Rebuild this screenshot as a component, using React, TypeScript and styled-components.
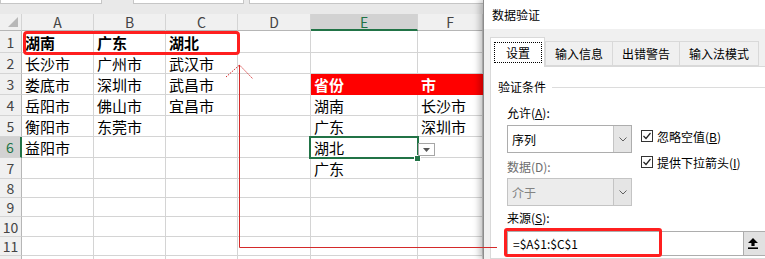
import styled, { createGlobalStyle } from "styled-components";

const GlobalStyle = createGlobalStyle`
  html, body {
    margin: 0;
    padding: 0;
    background: #fff;
  }
  body {
    font-family: "Noto Sans CJK SC", "Noto Sans", sans-serif;
    width: 765px;
    height: 259px;
    overflow: hidden;
  }
`;

const COLUMNS = ["A", "B", "C", "D", "E", "F"];
const ROW_HEIGHTS = [22, 21, 21, 21, 21, 21, 21, 19, 19, 20, 19, 20];
// 화면에 번호가 보이는 행 수 (12행은 아래 가장자리에서 잘림)
const VISIBLE_ROWS = 11;

// 시트 데이터 (행 단위)
const sheetRows: string[][] = [
  ["湖南", "广东", "湖北", "", "", ""],
  ["长沙市", "广州市", "武汉市", "", "", ""],
  ["娄底市", "深圳市", "武昌市", "", "省份", "市"],
  ["岳阳市", "佛山市", "宜昌市", "", "湖南", "长沙市"],
  ["衡阳市", "东莞市", "", "", "广东", "深圳市"],
  ["益阳市", "", "", "", "湖北", ""],
  ["", "", "", "", "广东", ""],
  [], [], [], [], [],
];

const ACTIVE_ROW = 5;
const ACTIVE_COL = 4;

const App = () => {
  return (
    <>
      <GlobalStyle />
      <Page>
        <Sheet>
          <FormulaStrip>
            <FormulaBox $width={100} $offset={0} />
            <FormulaBox $width={109} $offset={31} />
            <FormulaBox $width={240} $offset={5} />
          </FormulaStrip>
          <Grid>
            <Corner />
            {COLUMNS.map((col, c) => (
              <ColHeader key={col} $selected={c === ACTIVE_COL}>{col}</ColHeader>
            ))}
            {ROW_HEIGHTS.map((_, r) => (
              <Row key={r}>
                <RowHeader $selected={r === ACTIVE_ROW}>{r < VISIBLE_ROWS ? r + 1 : ""}</RowHeader>
                {COLUMNS.map((col, c) => {
                  const text = sheetRows[r]?.[c] ?? "";
                  const isActive = r === ACTIVE_ROW && c === ACTIVE_COL;
                  return (
                    <Cell
                      key={col}
                      $bold={r === 0 && c < 3}
                      $header={r === 2 && c >= 4}
                      $active={isActive}
                    >
                      {text}
                      {isActive && (
                        <>
                          <FillHandle />
                          <DropButton>
                            <svg width="7" height="4" viewBox="0 0 7 4">
                              <path d="M0 0h7L3.5 4z" fill="#555" />
                            </svg>
                          </DropButton>
                        </>
                      )}
                    </Cell>
                  );
                })}
              </Row>
            ))}
            <RowHighlight />
          </Grid>
        </Sheet>

        <Dialog>
          <TitleBar>数据验证</TitleBar>
          <DialogBody>
            <TabStrip>
              <Tab $active>
                <FocusRing>设置</FocusRing>
              </Tab>
              <Tab>输入信息</Tab>
              <Tab>出错警告</Tab>
              <Tab>输入法模式</Tab>
            </TabStrip>
            <Panel>
              <GroupHeader>
                <span>验证条件</span>
                <GroupLine />
              </GroupHeader>
              <Settings>
                <FieldsRow>
                  <LeftCol>
                    <FieldLabel $top={10}>允许(<u>A</u>):</FieldLabel>
                    <Select $top={4}>
                      <SelectValue>序列</SelectValue>
                      <SelectButton>
                        <Chevron />
                      </SelectButton>
                    </Select>
                    <FieldLabel $top={6} $muted>数据(D):</FieldLabel>
                    <Select $top={3} $disabled>
                      <SelectValue>介于</SelectValue>
                      <SelectButton>
                        <Chevron />
                      </SelectButton>
                    </Select>
                  </LeftCol>
                  <RightCol>
                    <CheckRow>
                      <CheckBox><CheckMark /></CheckBox>
                      <span>忽略空值(<u>B</u>)</span>
                    </CheckRow>
                    <CheckRow>
                      <CheckBox><CheckMark /></CheckBox>
                      <span>提供下拉箭头(<u>I</u>)</span>
                    </CheckRow>
                  </RightCol>
                </FieldsRow>
                <FieldLabel $top={4}>来源(<u>S</u>):</FieldLabel>
                <SourceField>
                  <SourceText>=$A$1:$C$1</SourceText>
                  <CollapseButton>
                    <svg width="10" height="11" viewBox="0 0 10 11">
                      <path d="M5 0L10 5H6.6V8H3.4V5H0z" fill="#000" />
                      <rect x="0" y="9.4" width="10" height="1.6" fill="#000" />
                    </svg>
                  </CollapseButton>
                  <SourceHighlight />
                </SourceField>
              </Settings>
            </Panel>
          </DialogBody>
        </Dialog>

        <Annotation width="765" height="259" viewBox="0 0 765 259">
          <polyline points="239.5,65 239.5,247.5 497,247.5" fill="none" stroke="#d42a2a" strokeWidth="1" />
          <polyline
            points="226,77 239.5,65 253,79"
            fill="none"
            stroke="#d42a2a"
            strokeWidth="1"
            strokeDasharray="1.5 1.2"
          />
        </Annotation>
      </Page>
    </>
  );
};

const Chevron = () => (
  <svg width="8" height="5" viewBox="0 0 8 5">
    <polyline points="0.5,0.5 4,4 7.5,0.5" fill="none" stroke="#606060" strokeWidth="1" />
  </svg>
);

const CheckMark = () => (
  <svg width="10" height="10" viewBox="0 0 10 10">
    <polyline points="1.5,5 4,7.5 8.5,2" fill="none" stroke="#222" strokeWidth="1.2" />
  </svg>
);

export default App;

const Page = styled.div`
  position: relative;
  display: flex;
  width: 765px;
  height: 259px;
  overflow: hidden;
  background: #fff;
`;

/* 스프레드시트 영역 */
const Sheet = styled.div`
  width: 483px;
  flex-shrink: 0;
  display: flex;
  flex-direction: column;
  overflow: hidden;
`;

const FormulaStrip = styled.div`
  display: flex;
  flex-shrink: 0;
  height: 14px;
  background: #e9e9e9;
`;

const FormulaBox = styled.div<{ $width: number; $offset: number }>`
  width: ${({ $width }) => $width}px;
  margin-left: ${({ $offset }) => $offset}px;
  height: 3px;
  flex-shrink: 0;
  background: #fff;
  border: 1px solid #c6c6c6;
  border-top: none;
`;

const Grid = styled.div`
  position: relative;
  flex-shrink: 0;
  display: grid;
  grid-template-columns: 22px 72px 72px 72px 73px 107px 65px;
  grid-template-rows: 17px ${ROW_HEIGHTS.map((h) => `${h}px`).join(" ")};
  font-size: 15px;
  color: #000;
`;

const Row = styled.div`
  display: contents;
`;

const Corner = styled.div`
  position: relative;
  background: #f0f0f0;
  border-right: 1px solid #d4d4d4;
  border-bottom: 1px solid #b6b6b6;

  &::after {
    content: "";
    position: absolute;
    right: 3px;
    bottom: 3px;
    border-style: solid;
    border-width: 0 0 10px 10px;
    border-color: transparent transparent #b8b8b8 transparent;
  }
`;

const ColHeader = styled.div<{ $selected?: boolean }>`
  display: flex;
  align-items: center;
  justify-content: center;
  font-size: 14px;
  color: ${({ $selected }) => ($selected ? "#217346" : "#444")};
  background: ${({ $selected }) => ($selected ? "#d2d2d2" : "#f0f0f0")};
  border-right: 1px solid #d4d4d4;
  border-bottom: ${({ $selected }) => ($selected ? "2px solid #217346" : "1px solid #b6b6b6")};
  box-sizing: border-box;
`;

const RowHeader = styled.div<{ $selected?: boolean }>`
  display: flex;
  align-items: center;
  justify-content: center;
  font-size: 14px;
  color: ${({ $selected }) => ($selected ? "#217346" : "#444")};
  background: ${({ $selected }) => ($selected ? "#d2d2d2" : "#f0f0f0")};
  border-right: ${({ $selected }) => ($selected ? "2px solid #217346" : "1px solid #b6b6b6")};
  border-bottom: 1px solid #d4d4d4;
  box-sizing: border-box;
`;

const Cell = styled.div<{ $bold?: boolean; $header?: boolean; $active?: boolean }>`
  position: relative;
  display: flex;
  align-items: center;
  padding: 1px 0 0 3px;
  box-sizing: border-box;
  white-space: nowrap;
  font-weight: ${({ $bold, $header }) => ($bold || $header ? 700 : 400)};
  color: ${({ $header }) => ($header ? "#fff" : "#000")};
  background: ${({ $header }) => ($header ? "#ff0000" : "#fff")};
  border-right: 1px solid ${({ $header }) => ($header ? "#ff0000" : "#d4d4d4")};
  border-bottom: 1px solid ${({ $header }) => ($header ? "#ff0000" : "#d4d4d4")};
  z-index: ${({ $active }) => ($active ? 2 : "auto")};

  ${({ $active }) =>
    $active &&
    `
    &::after {
      content: "";
      position: absolute;
      top: -1px;
      left: -2px;
      right: -2px;
      bottom: -2px;
      border: 2px solid #217346;
      pointer-events: none;
    }
  `}
`;

const FillHandle = styled.span`
  position: absolute;
  right: -4px;
  bottom: -5px;
  width: 5px;
  height: 5px;
  background: #217346;
  border: 1px solid #fff;
  z-index: 3;
`;

const DropButton = styled.span`
  position: absolute;
  left: calc(100% + 1px);
  top: 6px;
  width: 17px;
  height: 13px;
  box-sizing: border-box;
  display: flex;
  align-items: center;
  justify-content: center;
  background: #fff;
  border: 1px solid #a6a6a6;
  z-index: 3;
`;

const RowHighlight = styled.div`
  position: absolute;
  left: 23px;
  top: 17px;
  width: 217px;
  height: 24px;
  box-sizing: border-box;
  border: 3px solid #ff1f1f;
  border-radius: 4px;
  pointer-events: none;
`;

/* 데이터 검증 대화상자 */
const Dialog = styled.section`
  position: relative;
  z-index: 1;
  flex: 1;
  display: flex;
  flex-direction: column;
  min-width: 0;
  overflow: hidden;
  background: #f0f0f0;
  border-left: 1px solid #8c8c8c;
  box-shadow: -3px 0 7px rgba(0, 0, 0, 0.28);
  font-size: 12px;
  color: #000;
`;

const TitleBar = styled.div`
  height: 29px;
  flex-shrink: 0;
  display: flex;
  align-items: center;
  padding-left: 8px;
  background: #fff;
`;

const DialogBody = styled.div`
  flex: 1;
  display: flex;
  flex-direction: column;
  padding: 8px 0 0 6px;
`;

const TabStrip = styled.div`
  position: relative;
  z-index: 1;
  flex-shrink: 0;
  display: flex;
  align-items: flex-end;
  height: 29px;
`;

const Tab = styled.div<{ $active?: boolean }>`
  display: flex;
  align-items: center;
  box-sizing: border-box;
  white-space: nowrap;
  height: ${({ $active }) => ($active ? "30px" : "25px")};
  margin-bottom: ${({ $active }) => ($active ? "-1px" : "0")};
  margin-left: ${({ $active }) => ($active ? "0" : "-1px")};
  padding: ${({ $active }) => ($active ? "2px 2px 2px 3px" : "0 9px")};
  background: ${({ $active }) => ($active ? "#fff" : "#f0f0f0")};
  border: 1px solid #d9d9d9;
  border-bottom: ${({ $active }) => ($active ? "none" : "1px solid #d9d9d9")};

  &:first-child + & {
    margin-left: 0;
  }
`;

const FocusRing = styled.span`
  padding: 0 11px;
  line-height: 19px;
  border: 1px dotted #000;
`;

const Panel = styled.div`
  flex: 1;
  background: #fff;
  border: 1px solid #d9d9d9;
  border-right: none;
  padding: 12px 0 0 7px;
`;

const GroupHeader = styled.div`
  display: flex;
  align-items: center;
  gap: 6px;
  line-height: 16px;
`;

const GroupLine = styled.div`
  flex: 1;
  height: 1px;
  background: #dcdcdc;
`;

const Settings = styled.div`
  padding-left: 9px;
`;

const FieldsRow = styled.div`
  display: flex;
`;

const LeftCol = styled.div`
  width: 125px;
  flex-shrink: 0;
`;

const RightCol = styled.div`
  display: flex;
  flex-direction: column;
  gap: 4px;
  padding: 30px 0 0 9px;
`;

const FieldLabel = styled.div<{ $top: number; $muted?: boolean }>`
  margin-top: ${({ $top }) => $top}px;
  line-height: 16px;
  color: ${({ $muted }) => ($muted ? "#6d6d6d" : "#000")};
`;

const Select = styled.div<{ $top: number; $disabled?: boolean }>`
  display: flex;
  height: 28px;
  margin-top: ${({ $top }) => $top}px;
  box-sizing: border-box;
  background: ${({ $disabled }) => ($disabled ? "#ececec" : "#fff")};
  border: 1px solid ${({ $disabled }) => ($disabled ? "#c4c4c4" : "#adadad")};
  color: ${({ $disabled }) => ($disabled ? "#838383" : "#000")};
`;

const SelectValue = styled.div`
  flex: 1;
  display: flex;
  align-items: center;
  padding-left: 4px;
`;

const SelectButton = styled.div`
  width: 17px;
  display: flex;
  align-items: center;
  justify-content: center;
  background: #e5e5e5;
  border-left: 1px solid #c4c4c4;
`;

const CheckRow = styled.div`
  display: flex;
  align-items: center;
  gap: 4px;
  height: 22px;
  white-space: nowrap;
`;

const CheckBox = styled.span`
  width: 12px;
  height: 12px;
  box-sizing: border-box;
  display: flex;
  align-items: center;
  justify-content: center;
  background: #fff;
  border: 1px solid #333;
`;

const SourceField = styled.div`
  position: relative;
  display: flex;
  width: 280px;
  height: 25px;
  margin-top: 5px;
  box-sizing: border-box;
  background: #fff;
  border: 1px solid #adadad;
`;

const SourceText = styled.div`
  width: 235px;
  flex-shrink: 0;
  display: flex;
  align-items: center;
  padding-left: 5px;
  box-sizing: border-box;
`;

const CollapseButton = styled.div`
  width: 26px;
  display: flex;
  align-items: center;
  padding-left: 4px;
  background: #e1e1e1;
  border-left: 1px solid #adadad;
`;

const SourceHighlight = styled.div`
  position: absolute;
  left: -4px;
  top: -4px;
  width: 158px;
  height: 29px;
  box-sizing: border-box;
  border: 3px solid #ff1f1f;
  border-radius: 3px;
  pointer-events: none;
`;

const Annotation = styled.svg`
  position: absolute;
  left: 0;
  top: 0;
  z-index: 10;
  pointer-events: none;
`;
